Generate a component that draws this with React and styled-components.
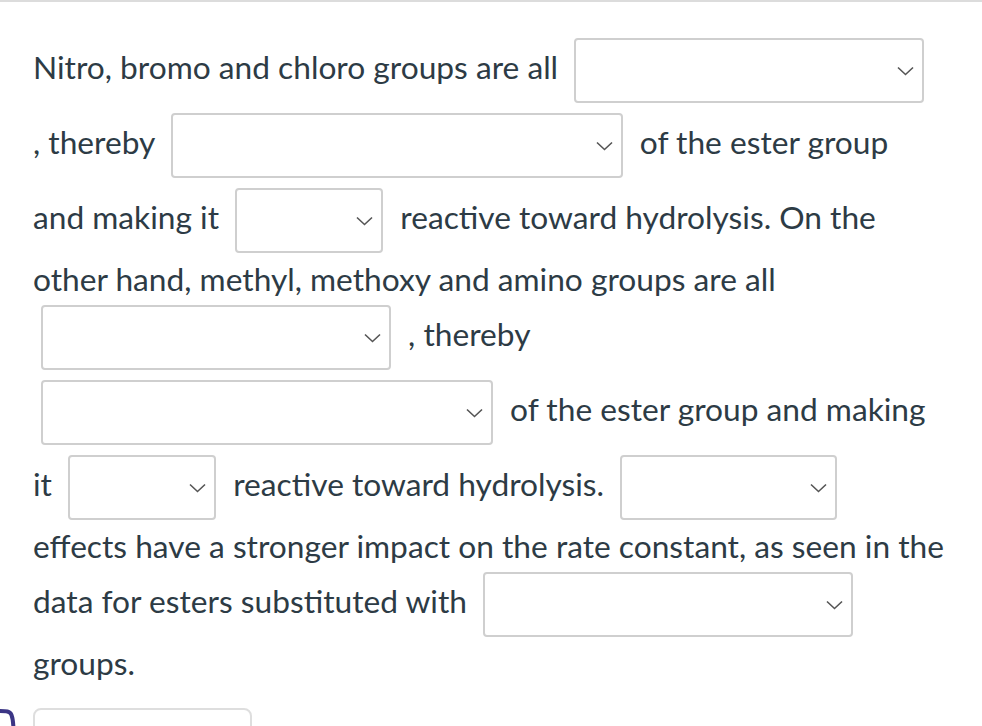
import React from "react";
import styled, { createGlobalStyle } from "styled-components";

const Global = createGlobalStyle`
  html, body { margin: 0; padding: 0; background: #fff; }
  body { font-family: Lato, "Noto Sans", sans-serif; overflow: hidden; }
`;

const Page = styled.div`
  width: 982px;
  height: 726px;
  border-top: 2px solid #dcdcdc;
  box-sizing: border-box;
  overflow: hidden;
`;

const Question = styled.div`
  padding: 31px 0 0 33px;
  width: 945px;
  box-sizing: border-box;
`;

const Paragraph = styled.p`
  margin: 0;
  font-size: 31.7px;
  line-height: 42px;
  color: #2d3b45;
`;

const SelectBox = styled.span`
  display: inline-flex;
  align-items: center;
  justify-content: flex-end;
  box-sizing: border-box;
  width: ${(p) => p.$w}px;
  height: 65px;
  margin: 5px 9px 5px 8px;
  padding-right: 8px;
  vertical-align: middle;
  border: 2px solid #cfcfcf;
  border-radius: 4px;
  background: #fff;
`;

const Chevron = () => (
  <svg width="17" height="10" viewBox="0 0 17 10" aria-hidden="true">
    <path d="M1 1.5 L8.5 8.5 L16 1.5" fill="none" stroke="#555" strokeWidth="1.6" />
  </svg>
);

const Dropdown = ({ w }) => (
  <SelectBox $w={w} role="combobox">
    <Chevron />
  </SelectBox>
);

const NextPart = styled.div`
  display: flex;
  align-items: flex-start;
  gap: 17px;
  margin-top: 24px;
  margin-left: -33px;
`;

const Marker = styled.svg`
  flex: none;
  display: block;
`;

const NextBox = styled.div`
  width: 219px;
  height: 40px;
  box-sizing: border-box;
  border: 2px solid #dedede;
  border-radius: 8px;
`;

export default function App() {
  return (
    <>
      <Global />
      <Page>
        <Question>
          <Paragraph>
            Nitro, bromo and chloro groups are all <Dropdown w={350} /> , thereby{" "}
            <Dropdown w={452} /> of the ester group and making it <Dropdown w={148} />{" "}
            reactive toward hydrolysis. On the other hand, methyl, methoxy and amino groups are all{" "}
            <Dropdown w={350} /> , thereby <Dropdown w={452} /> of the ester group and making it{" "}
            <Dropdown w={148} /> reactive toward hydrolysis. <Dropdown w={217} /> effects have a
            stronger impact on the rate constant, as seen in the data for esters substituted with{" "}
            <Dropdown w={370} /> groups.
          </Paragraph>
          <NextPart>
            <Marker width="16" height="24" viewBox="0 0 16 24">
              <path d="M0 3 C6 3 10 3 11.5 7 C13 11 13.5 16 13.5 24" fill="none" stroke="#3b3585" strokeWidth="4" />
            </Marker>
            <NextBox />
          </NextPart>
        </Question>
      </Page>
    </>
  );
}
